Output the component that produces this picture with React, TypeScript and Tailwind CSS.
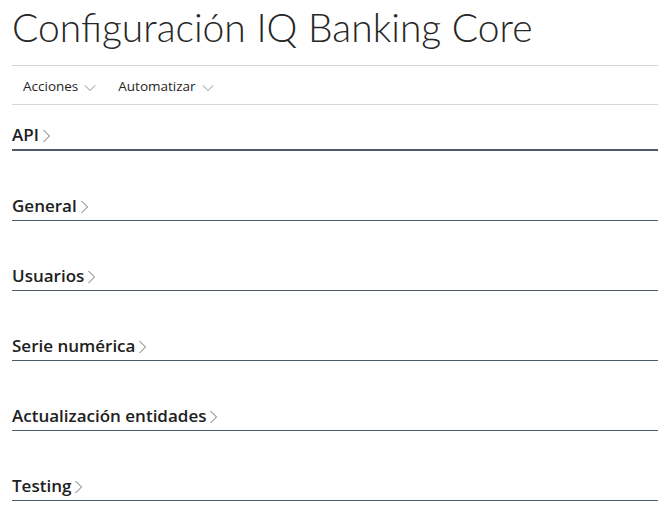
import React from "react";

const ChevronRight = () => (
  <svg width="9" height="16" viewBox="0 0 9 16" className="ml-[3px] mt-[2px]" fill="none">
    <polyline points="1.5,2 7.5,8 1.5,14" stroke="#707070" strokeWidth="1" />
  </svg>
);

const ChevronDown = () => (
  <svg width="12" height="8" viewBox="0 0 12 8" className="ml-[6px] mt-[2px]" fill="none">
    <polyline points="1,1.5 6,6.5 11,1.5" stroke="#8a8a8a" strokeWidth="1" />
  </svg>
);

const sections = ["API", "General", "Usuarios", "Serie numérica", "Actualización entidades", "Testing"];

export default function App() {
  return (
    <div
      className="w-[658px] h-[529px] bg-white overflow-hidden pl-[12px]"
      style={{ fontFamily: '"Open Sans", "Noto Sans", sans-serif' }}
    >
      <div className="h-[65px] flex items-start">
        <h1
          className="text-[39px] leading-[54px] font-light text-[#262626]"
          style={{ fontFamily: 'Lato, "Noto Sans", sans-serif' }}
        >
          Configuración IQ Banking Core
        </h1>
      </div>
      <div className="border-t border-[#d5d5d5] h-[40px] border-b flex items-center pl-[11px] pt-[3px] text-[13.5px] text-[#262626]">
        <div className="flex items-center">
          Acciones
          <ChevronDown />
        </div>
        <div className="flex items-center ml-[22px]">
          Automatizar
          <ChevronDown />
        </div>
      </div>
      {sections.map((s, i) => (
        <div
          key={s}
          className={
            i === 0
              ? "h-[46px] border-b-2 border-[#4f5b6b] flex items-end pb-[4px]"
              : "h-[70px] border-b border-[#4f5b6b] flex items-end pb-[4px]"
          }
        >
          <div className="flex items-center text-[17px] leading-[20px] font-semibold text-[#212121]">
            {s}
            <ChevronRight />
          </div>
        </div>
      ))}
    </div>
  );
}
